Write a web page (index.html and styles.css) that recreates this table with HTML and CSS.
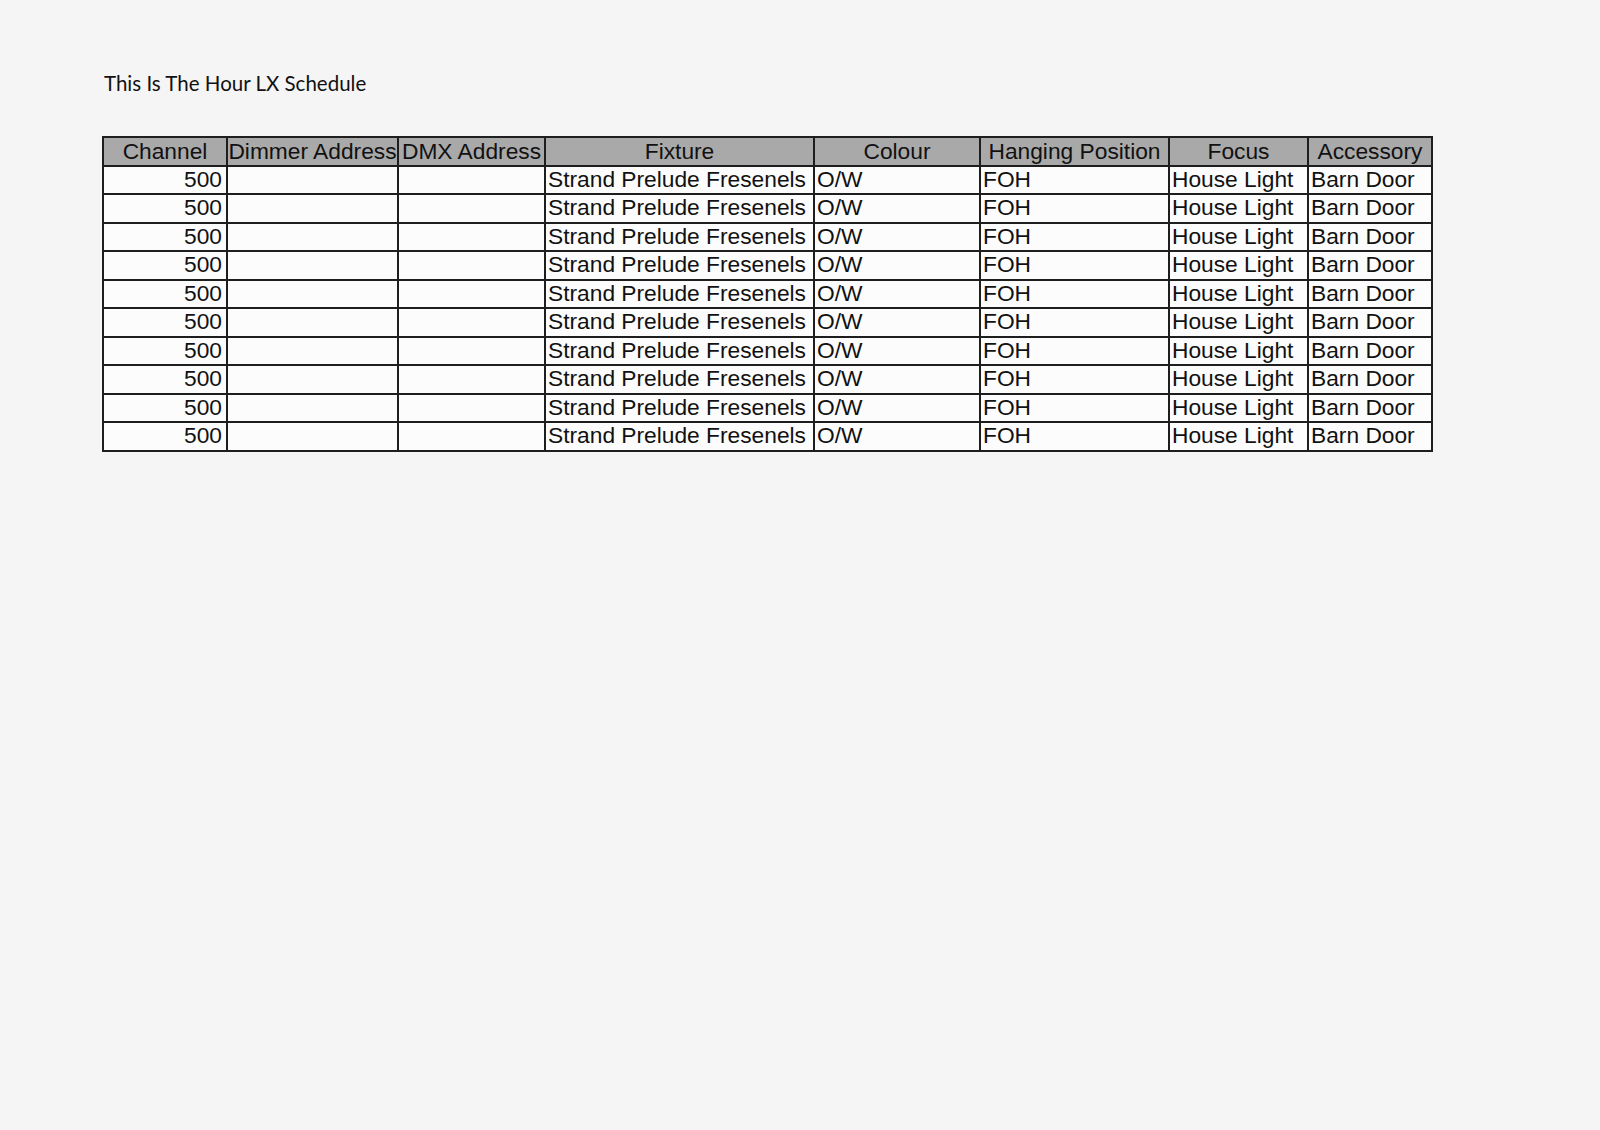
FILE: index.html
```html
<!DOCTYPE html>
<html lang="en">
<head>
<meta charset="utf-8">
<title>This Is The Hour LX Schedule</title>
<link rel="stylesheet" href="styles.css">
</head>
<body>
<main class="page">
  <h1 class="title">This Is The Hour LX Schedule</h1>
  <div class="sheet" role="table">
    <div class="row head" role="row">
      <div class="cell">Channel</div>
      <div class="cell">Dimmer Address</div>
      <div class="cell">DMX Address</div>
      <div class="cell">Fixture</div>
      <div class="cell">Colour</div>
      <div class="cell">Hanging Position</div>
      <div class="cell">Focus</div>
      <div class="cell">Accessory</div>
    </div>
    <div class="row" role="row"><div class="cell num">500</div><div class="cell"></div><div class="cell"></div><div class="cell">Strand Prelude Fresenels</div><div class="cell">O/W</div><div class="cell">FOH</div><div class="cell">House Light</div><div class="cell">Barn Door</div></div>
    <div class="row" role="row"><div class="cell num">500</div><div class="cell"></div><div class="cell"></div><div class="cell">Strand Prelude Fresenels</div><div class="cell">O/W</div><div class="cell">FOH</div><div class="cell">House Light</div><div class="cell">Barn Door</div></div>
    <div class="row" role="row"><div class="cell num">500</div><div class="cell"></div><div class="cell"></div><div class="cell">Strand Prelude Fresenels</div><div class="cell">O/W</div><div class="cell">FOH</div><div class="cell">House Light</div><div class="cell">Barn Door</div></div>
    <div class="row" role="row"><div class="cell num">500</div><div class="cell"></div><div class="cell"></div><div class="cell">Strand Prelude Fresenels</div><div class="cell">O/W</div><div class="cell">FOH</div><div class="cell">House Light</div><div class="cell">Barn Door</div></div>
    <div class="row" role="row"><div class="cell num">500</div><div class="cell"></div><div class="cell"></div><div class="cell">Strand Prelude Fresenels</div><div class="cell">O/W</div><div class="cell">FOH</div><div class="cell">House Light</div><div class="cell">Barn Door</div></div>
    <div class="row" role="row"><div class="cell num">500</div><div class="cell"></div><div class="cell"></div><div class="cell">Strand Prelude Fresenels</div><div class="cell">O/W</div><div class="cell">FOH</div><div class="cell">House Light</div><div class="cell">Barn Door</div></div>
    <div class="row" role="row"><div class="cell num">500</div><div class="cell"></div><div class="cell"></div><div class="cell">Strand Prelude Fresenels</div><div class="cell">O/W</div><div class="cell">FOH</div><div class="cell">House Light</div><div class="cell">Barn Door</div></div>
    <div class="row" role="row"><div class="cell num">500</div><div class="cell"></div><div class="cell"></div><div class="cell">Strand Prelude Fresenels</div><div class="cell">O/W</div><div class="cell">FOH</div><div class="cell">House Light</div><div class="cell">Barn Door</div></div>
    <div class="row" role="row"><div class="cell num">500</div><div class="cell"></div><div class="cell"></div><div class="cell">Strand Prelude Fresenels</div><div class="cell">O/W</div><div class="cell">FOH</div><div class="cell">House Light</div><div class="cell">Barn Door</div></div>
    <div class="row" role="row"><div class="cell num">500</div><div class="cell"></div><div class="cell"></div><div class="cell">Strand Prelude Fresenels</div><div class="cell">O/W</div><div class="cell">FOH</div><div class="cell">House Light</div><div class="cell">Barn Door</div></div>
  </div>
</main>
</body>
</html>
```
FILE: styles.css
```css
html, body {
  margin: 0;
  padding: 0;
  background: #f5f5f5;
}

.page {
  padding: 71px 0 0 102px;
  min-height: 1130px;
  box-sizing: border-box;
}

.title {
  margin: 0 0 41px 2px;
  font-family: Lato, "Open Sans", sans-serif;
  font-weight: 400;
  font-size: 20.5px;
  letter-spacing: 0;
  line-height: 24px;
  color: #111;
}

.sheet {
  display: grid;
  grid-template-columns: 124px 171px 147px 269px 166px 189px 139px 124px;
  grid-auto-rows: 28.5px;
  width: max-content;
  border-left: 2px solid #1e1e1e;
  border-top: 2px solid #1e1e1e;
  font-family: "Liberation Sans", Arial, sans-serif;
  font-size: 22.75px;
  color: #111;
}

.row {
  display: contents;
}

.cell {
  background: #fcfcfc;
  border-right: 2px solid #1e1e1e;
  border-bottom: 2px solid #1e1e1e;
  padding: 0 2px;
  line-height: 25.5px;
  white-space: nowrap;
}

.head .cell {
  background: #a9a9a9;
  text-align: center;
  padding: 0;
  line-height: 26px;
}

.cell.num {
  text-align: right;
  padding-right: 4px;
}
```
